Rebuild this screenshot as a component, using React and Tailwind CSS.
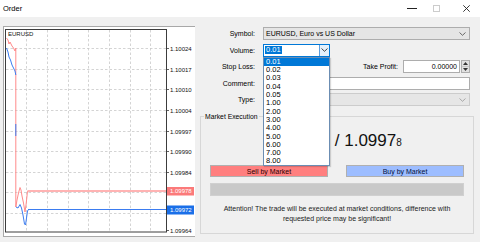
import React from "react";

const Chevron = ({ c = "#5a5a5a" }) => (
  <svg width="7" height="4" viewBox="0 0 7 4">
    <path d="M0.5 0.5 L3.5 3.3 L6.5 0.5" fill="none" stroke={c} strokeWidth="0.9" />
  </svg>
);

const Spinner = () => (
  <div className="w-[9px] h-full flex flex-col border border-[#adadad] bg-[#e1e1e1] ml-[1px]">
    <div className="flex-1 flex items-center justify-center border-b border-[#c8c8c8]">
      <svg width="5" height="3" viewBox="0 0 5 3"><path d="M0 3 L2.5 0 L5 3Z" fill="#333" /></svg>
    </div>
    <div className="flex-1 flex items-center justify-center">
      <svg width="5" height="3" viewBox="0 0 5 3"><path d="M0 0 L2.5 3 L5 0Z" fill="#333" /></svg>
    </div>
  </div>
);

const labels = [
  ["1.10024", 48],
  ["1.10017", 69],
  ["1.10010", 89],
  ["1.10004", 110],
  ["1.09997", 131],
  ["1.09990", 151],
  ["1.09984", 172],
  ["1.09964", 230],
];
const ticks = [48, 69, 89, 110, 131, 151, 172, 192, 213, 230];
const gridX = [26.5, 47.5, 68.5, 88.5, 109.5, 130.5, 150.5];
const gridY = [48.5, 69.5, 89.5, 110.5, 131.5, 151.5, 172.5, 192.5, 213.5];
const FF = "Liberation Sans, Arial, sans-serif";

function Chart() {
  return (
    <div className="ml-[3px] mt-[9px] w-[192px] h-[211px] bg-white border-l border-t border-b border-[#a8a8a8] shrink-0">
      <svg width="191" height="209" viewBox="4 27 191 209" className="block">
        {gridX.map((x) => (
          <line key={"gx" + x} x1={x} y1={30} x2={x} y2={231} stroke="#c9c9c9" strokeWidth="0.8" strokeDasharray="2.5 2" />
        ))}
        {gridY.map((y) => (
          <line key={"gy" + y} x1={6} y1={y} x2={166} y2={y} stroke="#c9c9c9" strokeWidth="0.8" strokeDasharray="2.5 2" />
        ))}
        <rect x="5.5" y="29.5" width="161" height="202.5" fill="none" stroke="#3c3c3c" strokeWidth="1" />
        {ticks.map((y) => (
          <line key={"t" + y} x1={166.5} y1={y + 0.5} x2={169} y2={y + 0.5} stroke="#3c3c3c" strokeWidth="0.8" />
        ))}
        {labels.map(([t, y]) => (
          <text key={t} x={170} y={y + 0.5} fontSize="6" dominantBaseline="central" fill="#111" fontFamily={FF}>{t}</text>
        ))}
        <text x={8} y={34} fontSize="6" dominantBaseline="central" fill="#111" fontFamily={FF}>EURUSD</text>
        {/* ask (red) */}
        <path d="M6.5 38 L8 40 L9 44 L10 42 L12 46 L13.5 48 L15 51 L15.8 48 L15.8 207 L17 200 L18.5 193 L20 187.5 L21 190 L22 196 L23.5 203 L25 212 L26 205 L27 196 L27.5 191" fill="none" stroke="#ff8a8a" strokeWidth="1" strokeLinejoin="round" />
        <line x1={27.5} y1={191} x2={166} y2={191} stroke="#ffb3b3" strokeWidth="2" />
        {/* bid (blue) */}
        <path d="M6.5 48 L8 52 L9 57 L10.5 60 L12 65 L13.5 68 L15 71 L15.8 75" fill="none" stroke="#3b7cf0" strokeWidth="1" strokeLinejoin="round" />
        <path d="M15.8 124 L15.8 136" fill="none" stroke="#3b7cf0" strokeWidth="1" />
        <path d="M16 207 L18 208 L20 204.5 L21.5 208 L23 215 L24.5 224 L25.5 225 L26.5 218 L27.5 211 L28.5 209.5" fill="none" stroke="#3b7cf0" strokeWidth="1" strokeLinejoin="round" />
        <line x1={28} y1={209.5} x2={166} y2={209.5} stroke="#3b7cf0" strokeWidth="1" />
        {/* price tags */}
        <rect x="167" y="187" width="27" height="8.5" fill="#fb7a7a" />
        <text x={170} y={191.3} fontSize="6" dominantBaseline="central" fill="#fff" fontFamily={FF}>1.09978</text>
        <rect x="167" y="205.5" width="27" height="9" fill="#1a6fe8" />
        <text x={170} y={210} fontSize="6" dominantBaseline="central" fill="#fff" fontFamily={FF}>1.09972</text>
      </svg>
    </div>
  );
}

const vols = ["0.01", "0.02", "0.03", "0.04", "0.05", "1.00", "2.00", "3.00", "4.00", "5.00", "6.00", "7.00", "8.00"];

function Row({ label, children }) {
  return (
    <div className="flex items-center h-[13px]">
      <div className="w-[60px] text-right text-[7px] leading-none shrink-0">{label}</div>
      <div className="ml-[8px] flex-1 h-full flex">{children}</div>
    </div>
  );
}

export default function App() {
  return (
    <div className="w-[480px] h-[242px] bg-[#f0f0f0] flex flex-col overflow-hidden text-black font-['Liberation_Sans',Arial,sans-serif]">
      {/* title bar */}
      <div className="h-[17px] bg-white flex items-center shrink-0">
        <span className="ml-[3px] text-[7.5px] leading-none">Order</span>
        <div className="ml-auto flex items-center h-full">
          <div className="w-[10px] h-px bg-[#222] mr-[16px]" />
          <div className="w-[7px] h-[7px] border border-[#cccccc] mr-[23px]" />
          <svg width="7" height="7" viewBox="0 0 7 7" className="mr-[10px]">
            <path d="M0.3 0.3 L6.7 6.7 M6.7 0.3 L0.3 6.7" stroke="#222" strokeWidth="0.9" />
          </svg>
        </div>
      </div>

      <div className="flex flex-1">
        <Chart />

        <div className="flex-1 flex flex-col pt-[10px]">
          <div className="flex flex-col gap-[3.5px] pr-[10px]">
            <Row label="Symbol:">
              <div className="flex-1 flex items-center border border-[#adadad] bg-[#e5e5e5] pl-[2px] pr-[3px]">
                <span className="text-[7px] leading-none flex-1">EURUSD, Euro vs US Dollar</span>
                <Chevron />
              </div>
            </Row>
            <Row label="Volume:">
              <div className="relative w-[67px] h-full flex border border-[#0078d7] bg-white z-10">
                <div className="flex-1 flex items-center pl-[1px]">
                  <span className="bg-[#0078d7] text-white text-[7.5px] leading-[8px] px-[1px]">0.01</span>
                </div>
                <div className="w-[10px] flex items-center justify-center border-l border-[#5a9ee0] bg-[#e5f1fb]">
                  <Chevron c="#333" />
                </div>
                <div className="absolute left-[-1px] top-[calc(100%+1px)] w-[67px] bg-white border border-[#6b8db3] flex flex-col shadow-[1px_1px_1px_rgba(0,0,0,0.15)]">
                  {vols.map((v, i) => (
                    <div
                      key={v}
                      className={
                        "h-[8.3px] flex items-center pl-[2px] text-[7.5px] leading-none " +
                        (i === 0 ? "bg-[#0078d7] text-white" : "text-black")
                      }
                    >
                      {v}
                    </div>
                  ))}
                </div>
              </div>
            </Row>
            <Row label="Stop Loss:">
              <div className="w-[67px] h-full flex">
                <div className="flex-1 border border-[#adadad] bg-white" />
                <Spinner />
              </div>
              <div className="flex-1 flex items-center justify-end pr-[5px] text-[7px] leading-none">Take Profit:</div>
              <div className="w-[67px] h-full flex">
                <div className="flex-1 border border-[#adadad] bg-white flex items-center justify-end pr-[2px] text-[7px] leading-none">0.00000</div>
                <Spinner />
              </div>
            </Row>
            <Row label="Comment:">
              <div className="flex-1 border border-[#adadad] bg-white" />
            </Row>
            <Row label="Type:">
              <div className="flex-1 flex items-center justify-end border border-[#cccccc] bg-[#e6e6e6] pr-[3px]">
                <Chevron c="#a0a0a0" />
              </div>
            </Row>
          </div>

          <fieldset className="ml-[5px] mr-[6px] mt-[5.5px] border border-[#d7d7d7] px-[9px] pb-[9px] flex flex-col">
            <legend className="ml-[-6px] px-[1px] text-[6.8px] leading-[9px]">Market Execution</legend>
            <div className="mt-[10.5px] h-[20px] flex items-baseline justify-center leading-[20px] text-[#111]">
              <span className="invisible text-[17px]">1.0997</span>
              <span className="invisible text-[10px] mr-[5px]">2</span>
              <span className="text-[17px]">/ 1.0997</span>
              <span className="text-[10px]">8</span>
            </div>
            <div className="mt-[14px] flex justify-between">
              <div className="w-[118px] h-[12px] bg-[#ff7f7f] border border-[#b0b0b0] flex items-center justify-center text-[7px] leading-none text-[#2a0000]">Sell by Market</div>
              <div className="w-[118px] h-[12px] bg-[#9dbdff] border border-[#b0b0b0] flex items-center justify-center text-[7px] leading-none text-[#001040]">Buy by Market</div>
            </div>
            <div className="mt-[6px] h-[13px] bg-[#c9c9c9] border border-[#d0d0d0]" />
            <div className="mt-[8px] text-center text-[7px] leading-[10px] text-[#222]">
              Attention! The trade will be executed at market conditions, difference with
              <br />
              requested price may be significant!
            </div>
          </fieldset>
        </div>
      </div>
    </div>
  );
}
